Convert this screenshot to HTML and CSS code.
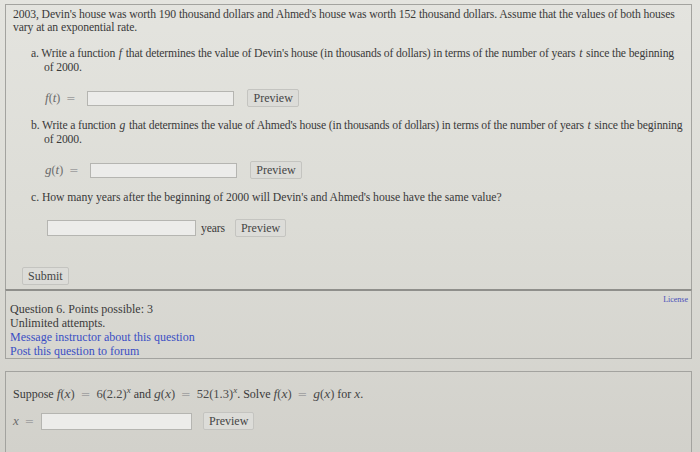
FILE: index.html
```html
<!DOCTYPE html>
<html>
<head>
<meta charset="utf-8">
<link rel="stylesheet" href="styles.css">
</head>
<body>
<section class="q-main">
  <p class="intro">2003, Devin's house was worth 190 thousand dollars and Ahmed's house was worth 152 thousand dollars. Assume that the values of both houses vary at an exponential rate.</p>

  <div class="part">
    <p class="part-text">a. Write a function <i class="mi">f</i> that determines the value of Devin's house (in thousands of dollars) in terms of the number of years <i class="mi">t</i> since the beginning of 2000.</p>
    <div class="ans-row">
      <span class="math"><i>f</i>(<i>t</i>)<span class="eq">=</span></span>
      <input class="ans" type="text">
      <button class="btn">Preview</button>
    </div>
  </div>

  <div class="part">
    <p class="part-text">b. Write a function <i class="mi">g</i> that determines the value of Ahmed's house (in thousands of dollars) in terms of the number of years <i class="mi">t</i> since the beginning of 2000.</p>
    <div class="ans-row">
      <span class="math"><i>g</i>(<i>t</i>)<span class="eq">=</span></span>
      <input class="ans" type="text">
      <button class="btn">Preview</button>
    </div>
  </div>

  <div class="part part-c">
    <p class="part-text part-text-c">c. How many years after the beginning of 2000 will Devin's and Ahmed's house have the same value?</p>
    <div class="ans-row ans-row-c">
      <input class="ans ans-c" type="text">
      <span class="unit">years</span>
      <button class="btn">Preview</button>
    </div>
  </div>

  <button class="btn submit">Submit</button>
</section>

<section class="q-info">
  <a class="license" href="#">License</a>
  <p>Question 6. Points possible: 3</p>
  <p>Unlimited attempts.</p>
  <p><a href="#">Message instructor about this question</a></p>
  <p><a href="#">Post this question to forum</a></p>
</section>

<section class="q-next">
  <p class="next-text">Suppose <span class="math"><i>f</i>(<i>x</i>)<span class="eq">=</span>6(2.2)<sup><i>x</i></sup></span> and <span class="math"><i>g</i>(<i>x</i>)<span class="eq">=</span>52(1.3)<sup><i>x</i></sup></span>. Solve <span class="math"><i>f</i>(<i>x</i>)<span class="eq">=</span><i>g</i>(<i>x</i>)</span> for <span class="math"><i>x</i></span>.</p>
  <div class="ans-row ans-row-x">
    <span class="math"><i>x</i><span class="eq">=</span></span>
    <input class="ans ans-x" type="text">
    <button class="btn">Preview</button>
  </div>
</section>
</body>
</html>
```

FILE: styles.css
```css
html, body {
  margin: 0;
  height: 452px;
  overflow: hidden;
}
body {
  padding-top: 4px;
  box-sizing: border-box;
  background: linear-gradient(180deg, #e4e4df 0%, #dcdcd6 50%, #d2d1cb 100%);
  font-family: "Liberation Serif", "Times New Roman", serif;
  font-size: 11.7px;
  letter-spacing: -0.15px;
  color: #3a3a3a;
}
p { margin: 0; }

.q-main {
  margin: 0 8px 0 5px;
  border: 1px solid #a3a39f;
  border-bottom: none;
  padding: 3px 6px 4px 7px;
}
.intro { line-height: 13px; letter-spacing: -0.1px; }

.part { margin: 12px 0 0 18px; }
.intro + .part { margin-top: 13px; }
.part-text {
  line-height: 14px;
  padding-left: 13px;
  text-indent: -13px;
}
.part-text-c { letter-spacing: -0.05px; }
.mi { font-style: italic; padding: 0 1px; }

.ans-row {
  display: flex;
  align-items: center;
  margin: 14px 0 0 14px;
  height: 18px;
}
.math {
  font-family: "Liberation Serif", serif;
  font-size: 12px;
  letter-spacing: 0;
  color: #4a4a4a;
  white-space: nowrap;
}
.math i { font-size: 13px; }
.eq { color: #a5a5a5; margin: 0 6px; font-family: "DejaVu Serif", serif; font-size: 11px; }
.math sup { font-size: 8px; line-height: 0; vertical-align: 5px; }
.math sup i { font-size: 9px; }
.ans-row .math { color: #6b6b6b; }

.ans {
  box-sizing: border-box;
  width: 147px;
  height: 15px;
  margin: 0 13px 0 6px;
  padding: 0;
  border: 1px solid #b5b5b1;
  background: #ececea;
}
.btn {
  box-sizing: border-box;
  height: 18px;
  padding: 0 5px;
  border: 1px solid #c4c4c0;
  border-radius: 2px;
  background: #dcdcd8;
  font-family: "Liberation Serif", serif;
  font-size: 12px;
  color: #454545;
  line-height: 16px;
}

.ans-row-c { margin: 14px 0 0 16px; }
.ans-c { width: 149px; height: 16px; margin: 0 5px 0 0; }
.unit { margin-right: 10px; }

.submit { margin: 30px 0 0 9px; display: block; }

.q-info {
  margin: 0 8px 0 5px;
  border: 1px solid #a3a39f;
  border-top: 2px solid #8f8f8b;
  padding: 11px 4px 0 4px;
  font-size: 12px;
  letter-spacing: 0;
  line-height: 14px;
  color: #3a3a3a;
}
.q-info a { color: #3a4fc4; text-decoration: none; }
.q-info .license {
  float: right;
  font-size: 8px;
  line-height: 8px;
  margin: -6px -1px 0 0;
  color: #4a4fb8;
}

.q-next {
  margin: 12px 8px 0 5px;
  border: 1px solid #a3a39f;
  border-bottom: none;
  padding: 15px 7px 0 7px;
  height: 80px;
}
.next-text { line-height: 14px; font-size: 12px; letter-spacing: 0; }
.next-text .math { font-size: 12.5px; }
.next-text .math i { font-size: 13.5px; }
.next-text .eq { font-size: 11.5px; margin: 0 6px; }
.next-text .math sup i { font-size: 9px; }
.ans-row-x { margin: 11px 0 0 0; }
.ans-x { width: 151px; height: 17px; margin: 0 11px 0 1px; }
```
